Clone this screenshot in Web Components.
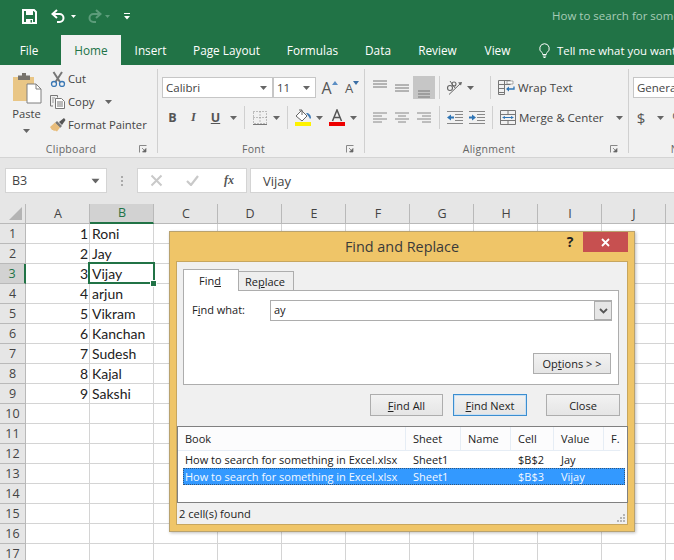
<!DOCTYPE html>
<html lang="en"><head><meta charset="utf-8"><title>Find and Replace</title>
<style>html,body{margin:0;padding:0;width:674px;height:560px;overflow:hidden;background:#fff}
body{font:11px "Open Sans",sans-serif;color:#444}
x-app{display:block}</style></head><body>
<x-app></x-app>
<script>
const ICONS={
save:[15,15,'<path d="M1 1h11l2 2v11H1z" fill="none" stroke="#fff" stroke-width="2"/><path d="M4 1.500h7V6H4z" fill="#fff"/><path d="M4 10h7v4H4z" fill="#fff"/><path d="M8.500 11h1.500v2.500H8.500z" fill="#217346"/>'],
undo:[16,14,'<path d="M6 1 1.500 5 6 9" fill="none" stroke="#fff" stroke-width="2"/><path d="M2 5h6.500a4 4 0 0 1 0 8H6" fill="none" stroke="#fff" stroke-width="2"/>'],
redo:[16,14,'<path d="M10 1l4.500 4L10 9" fill="none" stroke="#5c9c7a" stroke-width="2"/><path d="M14 5H7.500a4 4 0 0 0 0 8H10" fill="none" stroke="#5c9c7a" stroke-width="2"/>'],
capw:[6,3,'<path d="M0 0h5L2.500 3z" fill="#fff"/>'],
capd:[6,3,'<path d="M0 0h5L2.500 3z" fill="#5c9c7a"/>'],
qat:[6,7,'<path d="M0 0h6v1H0z" fill="#fff"/><path d="M0 3h6L3 6.500z" fill="#fff"/>'],
bulb:[11,15,'<path d="M5.500.7a4.800 4.800 0 0 0-2.600 8.800c.6.5.7 1.300.8 2h3.600c.1-.7.2-1.500.8-2A4.800 4.800 0 0 0 5.500.7z" fill="none" stroke="#fff"/><path d="M3.800 13h3.400M4.500 14.500h2" stroke="#fff" fill="none"/>'],
cap:[7,4,'<path d="M0 0h7L3.500 4z" fill="#666"/>'],
paste:[30,32,'<path d="M1 5h21v24H1z" fill="#e9c686"/><path d="M6 3.500h4V1h4v2.500h4V8H6z" fill="#77736c"/><path d="M15 12h9l5 5v14H15z" fill="#fff" stroke="#7f7f7f"/><path d="M24 12v5h5" fill="none" stroke="#7f7f7f"/>'],
cut:[16,16,'<path d="M3.500 1l6.500 10M12 1 5.500 11" fill="none" stroke="#777" stroke-width="2"/><circle cx="4" cy="13" r="2.500" fill="none" stroke="#3a78b5" stroke-width="1.300"/><circle cx="12" cy="13" r="2.500" fill="none" stroke="#3a78b5" stroke-width="1.300"/>'],
copy:[15,14,'<path d="M.5.500h7v2M3 11H.5V.5" fill="none" stroke="#777"/><path d="M5.500 3.500h6l3 3v7h-9z" fill="#fff" stroke="#777"/><path d="M7 7h6M7 9h6M7 11h6" stroke="#777"/><path d="M2 3h3M2 5h2M2 7h2" stroke="#999"/>'],
brush:[17,15,'<path d="M10 5l5-4 1.500 2L13 8z" fill="#555"/><path d="M8 4l5 5-2 2-5-5z" fill="#777"/><path d="M6 5.500l5 5-3 4-2-1-1 .5-1-1-1 0-2-3z" fill="#e8bd7c"/>'],
launch:[8,8,'<path d="M.5 7.500v-7h7" fill="none" stroke="#888"/><path d="M3 3l3 3M7 3.500V7H3.500z" fill="#666" stroke="#666" stroke-width=".7"/>'],
borders:[14,14,'<path d="M.5.500h13v12H.5zM7 .5v12M.5 6.500h13" fill="none" stroke="#888" stroke-dasharray="1 2"/><path d="M0 13.500h14" stroke="#777"/>'],
fill:[17,17,'<path d="M1 7l5.500-5.500L12 7l-5 5z" fill="#fff" stroke="#666"/><path d="M4 1h3v5" fill="none" stroke="#666"/><path d="M11 4c3 0 5 2 5 5l-1 1-1-2z" fill="#3f79b5"/><path d="M0 13h16v4H0z" fill="#fef200"/>'],
color:[17,17,'<path d="M0 13h16v4H0z" fill="#ee0000"/><path d="M3.500 12 8 1l4.500 11M5 8.500h6" fill="none" stroke="#555" stroke-width="1.500"/>'],
atop:[16,12,'<path d="M1 1h14M1 4h14M1 7h14" stroke="#777" fill="none"/>'],
amid:[16,12,'<path d="M1 3h14M1 6h14M1 9h14" stroke="#777" fill="none"/>'],
abot:[16,14,'<path d="M2 7h12M2 10h12M2 13h12" stroke="#777" fill="none"/>'],
left:[16,12,'<path d="M1 1h14M1 4h9M1 7h14M1 10h9" stroke="#888" fill="none"/>'],
center:[16,12,'<path d="M1 1h14M4 4h8M1 7h14M4 10h8" stroke="#888" fill="none"/>'],
right:[16,12,'<path d="M1 1h14M6 4h9M1 7h14M6 10h9" stroke="#888" fill="none"/>'],
outd:[16,14,'<path d="M0 .5h16M8 3.500h8M8 6.500h8M8 9.500h8M0 12.500h16" stroke="#888" fill="none"/><path d="M0 6.500 4 3.500v2h3v2H4v2z" fill="#2f75b5"/>'],
ind:[16,14,'<path d="M0 .5h16M8 3.500h8M8 6.500h8M8 9.500h8M0 12.500h16" stroke="#888" fill="none"/><path d="M7 6.500 3 3.500v2H0v2h3v2z" fill="#2f75b5"/>'],
orient:[17,15,'<circle cx="4" cy="8" r="2.500" fill="none" stroke="#666" stroke-width="1.100"/><circle cx="8" cy="4" r="2" fill="none" stroke="#666" stroke-width="1.100"/><path d="M4 1l5 7" stroke="#666" fill="none"/><path d="M3 14.500 15 3" stroke="#666" fill="none"/><path d="M16 2l-4 .5 3 3z" fill="#666"/>'],
wrap:[17,15,'<path d="M.5.500h12M.5 4.500h12M.5 8.500h6M.5 12.500h6M.5.500v14h6V.5" fill="none" stroke="#777"/><path d="M9 1h6v3H9z" fill="#fff" stroke="#777" stroke-width=".6"/><path d="M16 6.500v2.500h-6" fill="none" stroke="#2f75b5" stroke-width="1.300"/><path d="M8 9l3-2.500v5z" fill="#2f75b5"/>'],
merge:[16,15,'<path d="M.5.500h15v14H.5zM.5 4.500h15M.5 10.500h15M8 .5v4M8 10.500v4" fill="none" stroke="#777"/><path d="M3 7.500h10" stroke="#2f75b5"/><path d="M2 7.500 5 6v3zM14 7.500 11 6v3z" fill="#2f75b5"/>'],
x:[13,13,'<path d="M1.500 1.500l10 10M11.500 1.500l-10 10" stroke="#c9c9c9" stroke-width="2" fill="none"/>'],
check:[13,11,'<path d="M1 6l4 4 7-9" stroke="#c9c9c9" stroke-width="2.200" fill="none"/>'],
corner:[13,13,'<path d="M13 0v13H0z" fill="#b4b4b4"/>'],
close:[9,9,'<path d="M1 1l7 7M8 1 1 8" stroke="#fff" stroke-width="1.800" fill="none"/>'],
chev:[9,6,'<path d="M1 1l3.500 3.500L8 1" stroke="#555" stroke-width="1.800" fill="none"/>'],
grip:[10,9,'<path d="M7 0h2v2H7zM4 3h2v2H4zM7 3h2v2H7zM1 6h2v2H1zM4 6h2v2H4zM7 6h2v2H7z" fill="#b5b5b5"/>']
};
class XIco extends HTMLElement{
 connectedCallback(){ if(this.shadowRoot)return;
  const [w,h,p]=ICONS[this.getAttribute('name')];
  this.attachShadow({mode:'open'}).innerHTML=`<style>:host{display:inline-flex;line-height:0;flex:none}</style><svg xmlns="http://www.w3.org/2000/svg" width="${w}" height="${h}" viewBox="0 0 ${w} ${h}">${p}</svg>`;
 }}
customElements.define('x-ico',XIco);

class Base extends HTMLElement{
 constructor(){super();this.attachShadow({mode:'open'}).innerHTML=this.constructor.html;}
}
class XTitlebar extends Base{static html=`<style>
:host{display:flex;align-items:center;height:35px;box-sizing:border-box;padding-bottom:3px;background:#217346;flex:none}
.q{display:flex;align-items:center}
.t{margin:0 0 2px auto;width:122px;overflow:hidden;white-space:nowrap;color:#a7cbb6;font:11.500px "Open Sans",sans-serif}
</style><div class="q">
<x-ico name="save" style="margin:1px 0 0 22px"></x-ico>
<x-ico name="undo" style="margin:-1px 0 0 14px"></x-ico>
<x-ico name="capw" style="margin:0 0 0 4px"></x-ico>
<x-ico name="redo" style="margin:-1px 0 0 9px"></x-ico>
<x-ico name="capd" style="margin:0 0 0 3px"></x-ico>
<x-ico name="qat" style="margin:1px 0 0 13px"></x-ico>
</div><div class="t">How to search for something in Excel.xlsx - Excel</div>`}
class XTabs extends Base{static html=`<style>
:host{display:grid;grid-template-columns:61px 60px 59px 93px 79px 52px 67px 53px 1fr;height:30px;background:#217346;flex:none;font:11.800px "Open Sans",sans-serif;color:#fff}
div{display:flex;align-items:center;justify-content:center;white-space:nowrap}
.f{padding-right:3px}
.h{background:#f1f1f1;color:#217346}
.s{justify-content:flex-start;padding-left:15px;gap:7px;overflow:hidden;font-size:11.400px}
</style><div class="f">File</div><div class="h">Home</div><div>Insert</div><div>Page Layout</div><div>Formulas</div><div>Data</div><div>Review</div><div>View</div>
<div class="s"><x-ico name="bulb"></x-ico><span>Tell me what you want to do</span></div>`}
class XRgroup extends Base{static html=`<style>
:host{display:flex;flex-direction:column;flex:none;box-sizing:border-box;height:84px;margin-top:4px;border-right:1px solid #d0d0d0;width:var(--w)}
.b{flex:1;min-height:0}
.l{display:flex;height:17px;align-items:center;flex:none;margin-bottom:-4px}
.n{flex:1;text-align:center;color:#666;font-size:10.500px;letter-spacing:.3px}
.k{width:15px;display:flex}
</style><div class="b"><slot></slot></div><div class="l"><div class="n"><slot name="label"></slot></div><div class="k"><slot name="k"></slot></div></div>`}
const CELLCSS=`
.row{display:flex;align-items:center;height:21px}
.c{display:flex;align-items:center;justify-content:center;flex:none;height:21px}
.sep{width:1px;height:23px;background:#d0d0d0;flex:none}
.combo{box-sizing:border-box;height:21px;border:1px solid #c6c6c6;background:#fff;display:flex;align-items:center;padding:0 5px 0 3px;justify-content:space-between;font-size:11.500px;color:#444;flex:none}
`;
class XClipboard extends Base{static html=`<style>
:host{display:block}
.b{display:flex;padding:3px 0 0 11px}
.p{width:33px;display:flex;flex-direction:column;align-items:center;margin-left:-1px}
.p span{font-size:11.200px;margin-top:2px;line-height:16px}
.p x-ico:last-child{margin-top:7px}
.s{display:flex;flex-direction:column;margin-left:5px;margin-top:-5px;font-size:11.300px}
.s div{display:flex;align-items:center;height:23px;white-space:nowrap}
.i{width:20px;display:flex;flex:none;justify-content:center;padding-right:1px;box-sizing:border-box}
</style><x-rgroup style="--w:158px"><div class="b">
<div class="p"><x-ico name="paste"></x-ico><span>Paste</span><x-ico name="cap"></x-ico></div>
<div class="s"><div><span class="i"><x-ico name="cut"></x-ico></span>Cut</div><div><span class="i"><x-ico name="copy"></x-ico></span>Copy<x-ico name="cap" style="margin-left:11px"></x-ico></div><div><span class="i"><x-ico name="brush"></x-ico></span>Format Painter</div></div>
</div><span slot="label">Clipboard</span><x-ico slot="k" name="launch" style="margin-left:-3px"></x-ico></x-rgroup>`}
class XFontGroup extends Base{static html=`<style>:host{display:block}${CELLCSS}
.w{padding:8px 0 0 4px;display:flex;flex-direction:column;gap:9px}
.big{font-size:16px;color:#555}.sm{font-size:13px;color:#555}
.B{font:bold 12.500px "Open Sans",sans-serif;color:#555}
.I{font:italic bold 12.500px "Liberation Serif",serif;color:#555}
.U{font:bold 12.500px "Open Sans",sans-serif;color:#555;text-decoration:underline}
.tri{width:0;height:0;border:3px solid transparent;border-top:0;border-bottom:4px solid #5b8ec4;margin:-10px 0 0 0}
.trd{width:0;height:0;border:3px solid transparent;border-bottom:0;border-top:4px solid #3a6ea5;margin:-10px 0 0 0}
</style><x-rgroup style="--w:207px"><div class="w">
<div class="row"><div class="combo" style="width:111px">Calibri<x-ico name="cap"></x-ico></div><div class="combo" style="width:43px;padding-left:3px">11<x-ico name="cap"></x-ico></div>
<div class="c" style="width:25px"><span class="big" style="margin-left:2px">A</span><span class="tri"></span></div><div class="c" style="width:22px"><span class="sm">A</span><span class="trd"></span></div></div>
<div class="row"><div class="c B" style="width:21px">B</div><div class="c I" style="width:21px">I</div><div class="c U" style="width:23px">U</div><div class="c" style="width:12px"><x-ico name="cap"></x-ico></div>
<div class="c" style="width:10px"><div class="sep"></div></div>
<div class="c" style="width:22px"><x-ico name="borders"></x-ico></div><div class="c" style="width:11px"><x-ico name="cap"></x-ico></div>
<div class="c" style="width:11px"><div class="sep"></div></div>
<div class="c" style="width:20px"><x-ico name="fill"></x-ico></div><div class="c" style="width:12px"><x-ico name="cap"></x-ico></div>
<div class="c" style="width:24px"><x-ico name="color"></x-ico></div><div class="c" style="width:8px"><x-ico name="cap"></x-ico></div>
</div></div><span slot="label">Font</span><x-ico slot="k" name="launch" style="margin-left:-3px"></x-ico></x-rgroup>`}
class XAlignGroup extends Base{static html=`<style>:host{display:block}${CELLCSS}
.w{padding:8px 0 0 4px;display:flex;flex-direction:column;gap:9px}
.hl{background:#c6c6c6;height:23px;align-items:flex-end;padding-bottom:1px;box-sizing:border-box}
.t{display:flex;align-items:center;gap:3px;white-space:nowrap;font-size:11.500px;color:#444}
</style><x-rgroup style="--w:264px"><div class="w">
<div class="row"><div class="c" style="width:22px"><x-ico name="atop" style="margin-top:-4px"></x-ico></div><div class="c" style="width:22px"><x-ico name="amid"></x-ico></div><div class="c hl" style="width:22px"><x-ico name="abot"></x-ico></div>
<div class="c" style="width:8px"><div class="sep"></div></div><div class="c" style="width:22px"><x-ico name="orient"></x-ico></div><div class="c" style="width:10px"><x-ico name="cap"></x-ico></div>
<div class="c" style="width:10px;padding-left:10px"><div class="sep"></div></div>
<div class="t" style="margin-left:3px"><x-ico name="wrap"></x-ico>Wrap Text</div></div>
<div class="row"><div class="c" style="width:22px"><x-ico name="left"></x-ico></div><div class="c" style="width:22px"><x-ico name="center"></x-ico></div><div class="c" style="width:22px"><x-ico name="right"></x-ico></div>
<div class="c" style="width:8px"><div class="sep"></div></div><div class="c" style="width:24px"><x-ico name="outd"></x-ico></div><div class="c" style="width:20px"><x-ico name="ind"></x-ico></div>
<div class="c" style="width:10px"><div class="sep"></div></div>
<div class="t" style="margin-left:3px"><x-ico name="merge"></x-ico>Merge &amp; Center<x-ico name="cap" style="margin:0 0 0 9px"></x-ico></div></div>
</div><span slot="label">Alignment</span><x-ico slot="k" name="launch" style="margin-left:-3px"></x-ico></x-rgroup>`}
class XNumberGroup extends Base{static html=`<style>:host{display:block}${CELLCSS}
.w{padding:8px 0 0 4px;display:flex;flex-direction:column;gap:9px}
</style><x-rgroup style="--w:142px"><div class="w">
<div class="row"><div class="combo" style="width:110px">General</div></div>
<div class="row"><div class="c" style="width:16px;font-size:15px;color:#555">$</div><div class="c" style="width:23px"><x-ico name="cap"></x-ico></div><div class="c" style="width:12px;font-size:14px;color:#555">%</div></div>
</div><span slot="label">Number</span></x-rgroup>`}
class XRibbon extends Base{static html=`<style>
:host{display:flex;height:93px;box-sizing:border-box;background:#f1f1f1;border-bottom:1px solid #d4d4d4;overflow:hidden;flex:none}
</style><x-clipboard></x-clipboard><x-font-group></x-font-group><x-align-group></x-align-group><x-number-group></x-number-group>`}
class XFormula extends Base{static html=`<style>
:host{display:flex;align-items:stretch;height:46px;box-sizing:border-box;background:#e6e6e6;padding:10px 0 11px 5px;flex:none;font-size:12.500px;color:#444}
.box{background:#fff;border:1px solid #d4d4d4;box-sizing:border-box;display:flex;align-items:center}
.n{width:102px;justify-content:space-between;padding:0 7px 0 6px}
.d{width:30px;display:flex;flex-direction:column;justify-content:center;align-items:center;gap:2px;flex:none}
.d i{width:2px;height:2px;background:#aaa;display:block}
.b{width:110px;padding-left:12px}
.fx{font:italic bold 12px "Liberation Serif",serif;color:#555;margin-left:25px}
.v{flex:1;margin-left:3px;padding-left:12px;border-right:0;font-size:13px}
</style><div class="box n">B3<x-ico name="cap" style="transform:scale(1.200)"></x-ico></div>
<div class="d"><i></i><i></i><i></i></div>
<div class="box b"><x-ico name="x"></x-ico><x-ico name="check" style="margin-left:23px"></x-ico><span class="fx">fx</span></div>
<div class="box v">Vijay</div>`}
class XSheet extends Base{static html=`<style>
:host{display:block;height:356px;overflow:hidden;background:#fff;font:14px Lato,sans-serif;color:#222}
.g{display:grid;grid-template-columns:26px repeat(11,64px);grid-auto-rows:20px}
.g>div{box-sizing:border-box;border-right:1px solid #d4d4d4;border-bottom:1px solid #d4d4d4;display:flex;align-items:center;overflow:visible;white-space:nowrap}
.g>.h{background:#e6e6e6;border-color:#b9b9b9;justify-content:center;color:#444;font:12.500px "Open Sans",sans-serif}
.g>.col{padding-bottom:1px;padding-left:1px}
.g>.h.sel{background:#d2d2d2}
.g>.col.sel{border-bottom:2px solid #217346;color:#217346}
.g>.row.sel{border-right:2px solid #217346;color:#217346}
.g>.n{justify-content:flex-end;padding-right:1px}
.g>.t{padding-left:2px}
.g>.corner{align-items:flex-end;justify-content:flex-end;padding:0 3px 3px 0}
.cur{position:relative}
.cur::before{content:"";position:absolute;left:-2px;top:-2px;right:-2px;bottom:-1px;border:2px solid #217346}
.cur::after{content:"";position:absolute;right:-4px;bottom:-4px;width:5px;height:5px;background:#217346;border:1px solid #fff}
</style><div class="g" id="g"></div>`;
 connectedCallback(){
  const names=['Roni','Jay','Vijay','arjun','Vikram','Kanchan','Sudesh','Kajal','Sakshi'];
  let h='<div class="h corner"><x-ico name="corner"></x-ico></div>';
  'ABCDEFGHIJK'.split('').forEach(c=>h+=`<div class="h col${c=='B'?' sel':''}">${c}</div>`);
  for(let r=1;r<=17;r++){
   h+=`<div class="h row${r==3?' sel':''}">${r}</div>`;
   h+=`<div class="n">${r<=9?r:''}</div><div class="t${r==3?' cur':''}">${r<=9?names[r-1]:''}</div>`;
   for(let i=0;i<9;i++)h+='<div></div>';
  }
  this.shadowRoot.getElementById('g').innerHTML=h;
 }}
class XBtn extends Base{static html=`<style>
:host{display:flex;align-items:center;justify-content:center;box-sizing:border-box;height:22px;border:1px solid #adadad;background:linear-gradient(#f2f2f2,#e5e5e5);font-size:11px;color:#222;white-space:nowrap;flex:none}
:host([def]){border-color:#3c8ed0;box-shadow:inset 0 0 0 1px #c8e0f4}
</style><slot></slot>`}
class XDialog extends Base{static html=`<style>
:host{position:absolute;left:169px;top:231px;width:466px;height:301px;box-sizing:border-box;background:#efc568;border:1px solid #b8a26f;display:flex;flex-direction:column;font:11px "Open Sans",sans-serif;color:#222;box-shadow:1px 1px 3px rgba(0,0,0,.25)}
u{text-decoration:underline}
.tb{height:29px;display:flex;flex:none}
.ti{flex:1;text-align:center;font-size:14.400px;color:#3a3a3a;line-height:30px;padding-left:77px;white-space:nowrap}
.q{font:bold 14px "Open Sans",sans-serif;width:26px;text-align:center;line-height:20px;color:#222}
.cl{width:45px;height:20px;background:#c75050;display:flex;align-items:center;justify-content:center;margin-right:6px}
.in{margin:0 6px 6px;flex:1;background:#f0f0f0;border:1px solid #c7a65e;display:flex;flex-direction:column;box-sizing:border-box;min-height:0}
.tabs{display:flex;align-items:flex-end;height:28px;padding-left:6px;flex:none}
.tab{box-sizing:border-box;display:flex;align-items:center;justify-content:center;border:1px solid #adadad;border-bottom:0}
.on{width:56px;height:22px;background:#fff;margin-bottom:-1px;position:relative;z-index:1;padding-right:2px}
.off{width:55px;height:19px;background:#eee;border-left:0;padding-right:2px}
.pn{margin:0 8px 0 6px;height:95px;box-sizing:border-box;background:#fff;border:1px solid #adadad;flex:none;padding:9px 6px 0 8px;display:flex;flex-direction:column}
.fw{display:flex;align-items:center;height:21px}
.lb{width:78px;flex:none;padding-bottom:2px}
.inp{flex:1;height:21px;box-sizing:border-box;border:1px solid #adadad;padding-left:3px;display:flex;align-items:center;justify-content:space-between}
.inp span{padding-bottom:2px}
.dd{width:18px;height:19px;margin-right:-1px;background:#e6e6e6;border:1px solid #adadad;box-sizing:border-box;display:flex;align-items:center;justify-content:center}
.op{display:flex;justify-content:flex-end;margin-top:32px;padding-right:1px}
.bs{display:flex;height:22px;margin:9px 0 0 193px;flex:none}
.ls{margin:10px 0 0 0;height:77px;box-sizing:border-box;background:#fff;border:1px solid #808080;flex:none;display:flex;flex-direction:column;padding:0 2px 0 0;width:451px}
.gr{display:grid;grid-template-columns:228px 55px 50px 43px 50px 16px;flex:none;white-space:nowrap}
.he{height:24px;background:#fcfcfd}
.he div{padding-left:7px;display:flex;align-items:center;border-right:1px solid #e6edf5;border-bottom:1px solid #e6edf5;box-sizing:border-box}
.rw{height:17px;margin-left:5px;grid-template-columns:223px 55px 50px 43px 50px 21px}
.rw div{padding-left:2px;display:flex;align-items:center}
.rw div+div{padding-left:7px}
.s{background:#3399ff;color:#f2f8ff;outline:1px dotted #33557a;outline-offset:-1px}
.st{flex:1;display:flex;align-items:center;justify-content:space-between;padding:0 1px 0 2px;min-height:0;font-size:11.100px}
.gp{align-self:flex-end;margin-bottom:1px}
</style>
<div class="tb"><div class="ti">Find and Replace</div><div class="q">?</div><div class="cl"><x-ico name="close"></x-ico></div></div>
<div class="in">
 <div class="tabs"><div class="tab on">Fin<u>d</u></div><div class="tab off">Re<u>p</u>lace</div></div>
 <div class="pn">
  <div class="fw"><div class="lb">F<u>i</u>nd what:</div><div class="inp"><span>ay</span><div class="dd"><x-ico name="chev"></x-ico></div></div></div>
  <div class="op"><x-btn style="width:78px;height:21px">Op<u>t</u>ions &gt; &gt;</x-btn></div>
 </div>
 <div class="bs"><x-btn style="width:73px"><u>F</u>ind All</x-btn><x-btn def style="width:74px;margin-left:10px"><u>F</u>ind Next</x-btn><x-btn style="width:74px;margin-left:19px">Close</x-btn></div>
 <div class="ls">
  <div class="gr he"><div>Book</div><div>Sheet</div><div>Name</div><div>Cell</div><div>Value</div><div style="border-right:0">F.</div></div>
  <div class="gr rw"><div>How to search for something in Excel.xlsx</div><div>Sheet1</div><div></div><div>$B$2</div><div>Jay</div><div></div></div>
  <div class="gr rw s"><div>How to search for something in Excel.xlsx</div><div>Sheet1</div><div></div><div>$B$3</div><div>Vijay</div><div></div></div>
 </div>
 <div class="st"><span>2 cell(s) found</span><x-ico class="gp" name="grip"></x-ico></div>
</div>`}
class XApp extends Base{static html=`<style>
:host{display:flex;flex-direction:column;width:674px;height:560px;overflow:hidden;position:relative}
</style><x-titlebar></x-titlebar><x-tabs></x-tabs><x-ribbon></x-ribbon><x-formula></x-formula><x-sheet></x-sheet><x-dialog></x-dialog>`}
const defs={'x-titlebar':XTitlebar,'x-tabs':XTabs,'x-rgroup':XRgroup,'x-clipboard':XClipboard,'x-font-group':XFontGroup,'x-align-group':XAlignGroup,'x-number-group':XNumberGroup,'x-ribbon':XRibbon,'x-formula':XFormula,'x-sheet':XSheet,'x-btn':XBtn,'x-dialog':XDialog,'x-app':XApp};
for(const k in defs)customElements.define(k,defs[k]);
</script></body></html>
